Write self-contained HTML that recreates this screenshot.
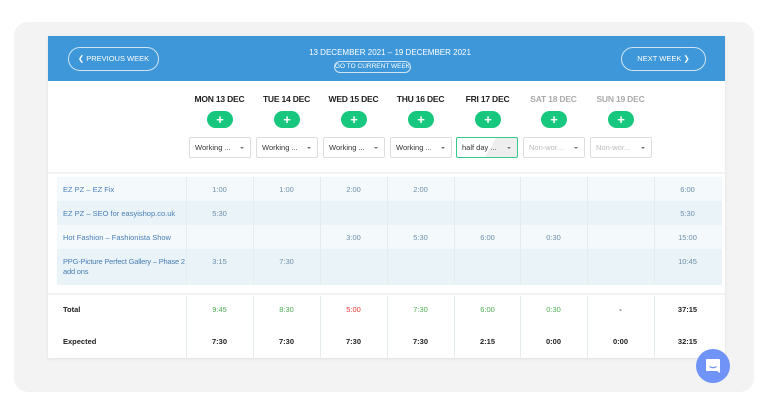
<!DOCTYPE html>
<html><head><style>
*{margin:0;padding:0;box-sizing:border-box}
body{width:768px;height:414px;background:#fff;font-family:"Liberation Sans",sans-serif;position:relative;overflow:hidden}
.panel{position:absolute;left:14px;top:22px;width:740px;height:370px;background:#f3f3f3;border-radius:14px}
.card{position:absolute;left:48px;top:36px;width:677px;height:322px;background:#fff;box-shadow:0 1px 3px rgba(0,0,0,.08)}
.hdr{position:absolute;left:48px;top:36px;width:677px;height:45px;background:#3d97d9}
.btn{position:absolute;border:1px solid rgba(255,255,255,.75);border-radius:13px;color:#fff;font-size:7.5px;text-align:center;white-space:nowrap;overflow:hidden}
.a{position:absolute;font-size:7.5px;white-space:nowrap}
.dh{position:absolute;top:94px;width:67px;text-align:center;font-size:8.5px;font-weight:bold;color:#222;letter-spacing:-.2px}
.plus{position:absolute;top:111px;width:26px;height:17px;border-radius:9px;background:#18c77e;color:#fff;font-size:13px;font-weight:bold;text-align:center;line-height:17px}
.dd{position:absolute;top:137px;width:62px;height:21px;border:1px solid #ddd;border-radius:2px;font-size:7.5px;color:#333;line-height:19px;padding-left:5px}
.dd:after{content:"";position:absolute;right:6px;top:9px;border:2px solid transparent;border-top:2.5px solid #777}
.row{position:absolute;left:57px;width:665px}
.c{position:absolute;width:67px;text-align:center;font-size:7.5px}
.vl{position:absolute;width:1px;background:#e4ecef}
</style></head><body>
<div class="panel"></div>
<div class="card"></div>
<div class="hdr"></div>
<div class="btn" style="left:68px;top:47px;width:91px;height:24px;line-height:22px">&#10094; PREVIOUS WEEK</div>
<div class="btn" style="left:621px;top:47px;width:85px;height:24px;line-height:22px">NEXT WEEK &#10095;</div>
<div class="a" style="left:290px;top:48px;width:200px;text-align:center;color:#fff;font-size:8px">13 DECEMBER 2021 – 19 DECEMBER 2021</div>
<div class="btn" style="left:334px;top:61px;width:77px;height:12px;line-height:10px;font-size:6.5px;border-radius:6px">GO TO CURRENT WEEK</div>

<div class="dh" style="left:186px">MON 13 DEC</div>
<div class="dh" style="left:253px">TUE 14 DEC</div>
<div class="dh" style="left:320px">WED 15 DEC</div>
<div class="dh" style="left:387px">THU 16 DEC</div>
<div class="dh" style="left:454px">FRI 17 DEC</div>
<div class="dh" style="left:520px;color:#aaa">SAT 18 DEC</div>
<div class="dh" style="left:587px;color:#aaa">SUN 19 DEC</div>

<div class="plus" style="left:207px">+</div><div class="plus" style="left:274px">+</div><div class="plus" style="left:341px">+</div><div class="plus" style="left:408px">+</div><div class="plus" style="left:475px">+</div><div class="plus" style="left:541px">+</div><div class="plus" style="left:608px">+</div>

<div class="dd" style="left:189px">Working ...</div>
<div class="dd" style="left:256px">Working ...</div>
<div class="dd" style="left:323px">Working ...</div>
<div class="dd" style="left:390px">Working ...</div>
<div class="dd" style="left:456px;border-color:#35c98a;background:linear-gradient(120deg,#fff 55%,#eee 55%)">half day ...</div>
<div class="dd" style="left:523px;color:#bbb">Non-wor...</div>
<div class="dd" style="left:590px;color:#bbb">Non-wor...</div>

<div style="position:absolute;left:48px;top:172px;width:677px;height:2px;background:#f2f2f2"></div>
<div class="row" style="top:177px;height:24px;background:#f4f9fc"></div>
<div class="row" style="top:201px;height:24px;background:#e9f3f8"></div>
<div class="row" style="top:225px;height:24px;background:#f4f9fc"></div>
<div class="row" style="top:249px;height:36px;background:#e9f3f8"></div>
<div style="position:absolute;left:48px;top:293px;width:677px;height:2px;background:#f2f2f2"></div>

<div class="vl" style="left:186px;top:177px;height:108px"></div><div class="vl" style="left:253px;top:177px;height:108px"></div><div class="vl" style="left:320px;top:177px;height:108px"></div><div class="vl" style="left:387px;top:177px;height:108px"></div><div class="vl" style="left:454px;top:177px;height:108px"></div><div class="vl" style="left:520px;top:177px;height:108px"></div><div class="vl" style="left:587px;top:177px;height:108px"></div><div class="vl" style="left:654px;top:177px;height:108px"></div>
<div class="vl" style="left:186px;top:296px;height:62px"></div><div class="vl" style="left:253px;top:296px;height:62px"></div><div class="vl" style="left:320px;top:296px;height:62px"></div><div class="vl" style="left:387px;top:296px;height:62px"></div><div class="vl" style="left:454px;top:296px;height:62px"></div><div class="vl" style="left:520px;top:296px;height:62px"></div><div class="vl" style="left:587px;top:296px;height:62px"></div><div class="vl" style="left:654px;top:296px;height:62px"></div>

<div style="color:#4a7fb5">
<div class="a" style="left:63px;top:185px">EZ PZ – EZ Fix</div>
<div class="a" style="left:63px;top:209px">EZ PZ – SEO for easyishop.co.uk</div>
<div class="a" style="left:63px;top:233px">Hot Fashion – Fashionista Show</div>
<div class="a" style="left:63px;top:257px;line-height:10px;letter-spacing:-.2px">PPG-Picture Perfect Gallery – Phase 2<br>add ons</div>
</div>
<div style="color:#6f8fab">
<div class="c" style="left:186px;top:185px">1:00</div><div class="c" style="left:253px;top:185px">1:00</div><div class="c" style="left:320px;top:185px">2:00</div><div class="c" style="left:387px;top:185px">2:00</div><div class="c" style="left:654px;top:185px">6:00</div>
<div class="c" style="left:186px;top:209px">5:30</div><div class="c" style="left:654px;top:209px">5:30</div>
<div class="c" style="left:320px;top:233px">3:00</div><div class="c" style="left:387px;top:233px">5:30</div><div class="c" style="left:454px;top:233px">6:00</div><div class="c" style="left:520px;top:233px">0:30</div><div class="c" style="left:654px;top:233px">15:00</div>
<div class="c" style="left:186px;top:257px">3:15</div><div class="c" style="left:253px;top:257px">7:30</div><div class="c" style="left:654px;top:257px">10:45</div>
</div>

<div class="a" style="left:63px;top:305px;font-weight:bold;color:#222">Total</div>
<div class="c" style="left:186px;top:305px;color:#4caf50">9:45</div><div class="c" style="left:253px;top:305px;color:#4caf50">8:30</div><div class="c" style="left:320px;top:305px;color:#e53935">5:00</div><div class="c" style="left:387px;top:305px;color:#4caf50">7:30</div><div class="c" style="left:454px;top:305px;color:#4caf50">6:00</div><div class="c" style="left:520px;top:305px;color:#4caf50">0:30</div><div class="c" style="left:587px;top:305px;color:#333;font-weight:bold">-</div><div class="c" style="left:654px;top:305px;font-weight:bold;color:#222">37:15</div>

<div style="font-weight:bold;color:#222">
<div class="a" style="left:63px;top:337px">Expected</div>
<div class="c" style="left:186px;top:337px">7:30</div><div class="c" style="left:253px;top:337px">7:30</div><div class="c" style="left:320px;top:337px">7:30</div><div class="c" style="left:387px;top:337px">7:30</div><div class="c" style="left:454px;top:337px">2:15</div><div class="c" style="left:520px;top:337px">0:00</div><div class="c" style="left:587px;top:337px">0:00</div><div class="c" style="left:654px;top:337px">32:15</div>
</div>

<div style="position:absolute;left:696px;top:349px;width:34px;height:34px;border-radius:50%;background:#6f93f7"></div>
<svg style="position:absolute;left:704px;top:357px" width="18" height="18" viewBox="0 0 18 18"><path d="M3 2h12a1 1 0 0 1 1 1v13l-3-2H3a1 1 0 0 1-1-1V3a1 1 0 0 1 1-1z" fill="#fff"/><path d="M5.5 9.5q3.5 2.5 7 0" stroke="#6f93f7" stroke-width="1.3" fill="none"/></svg>
</body></html>
